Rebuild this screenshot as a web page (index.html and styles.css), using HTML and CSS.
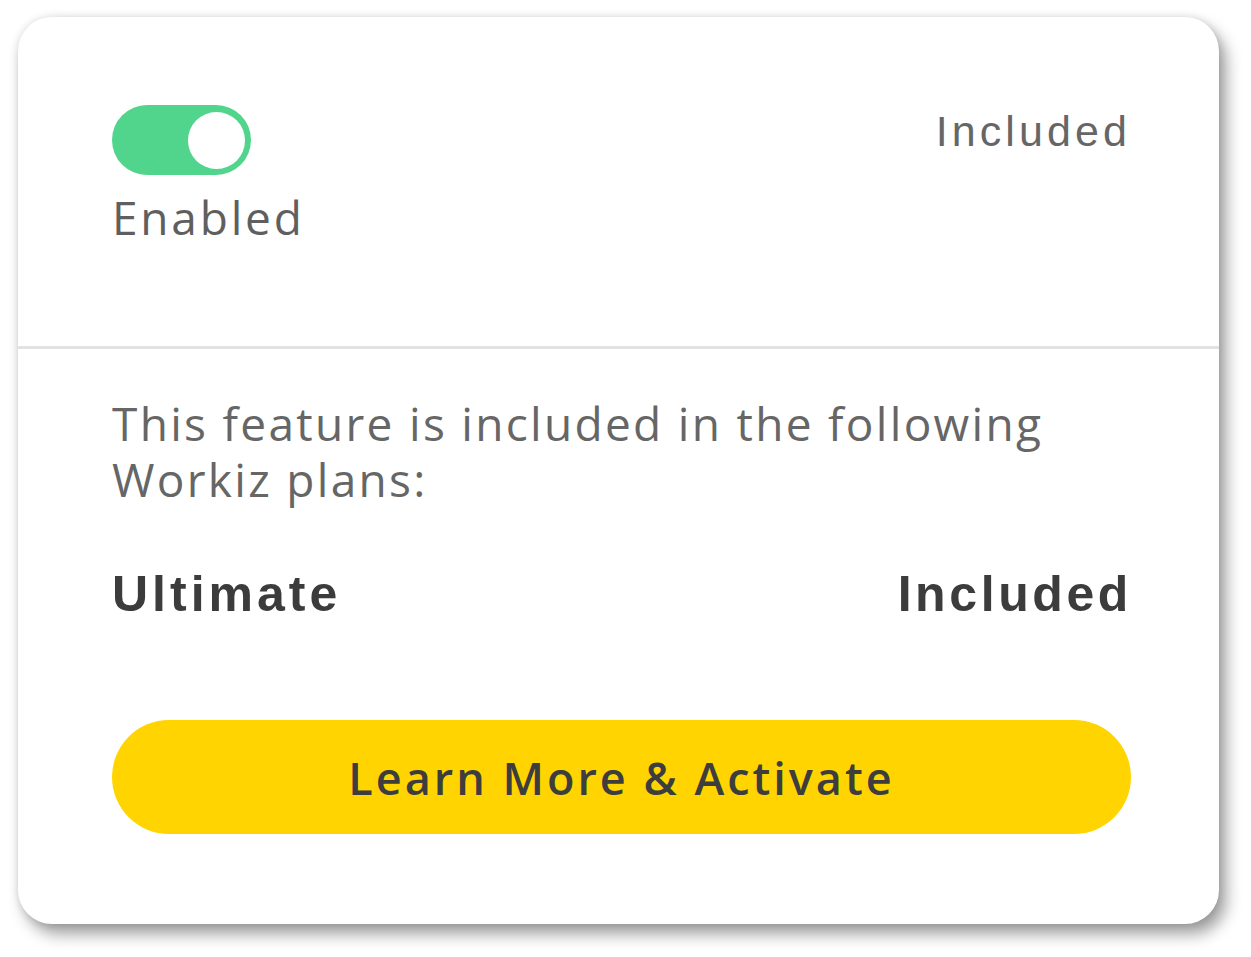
FILE: index.html
```html
<!DOCTYPE html>
<html lang="en">
<head>
<meta charset="utf-8">
<title>Feature</title>
<link rel="stylesheet" href="styles.css">
</head>
<body>
<div class="card">
  <div class="top">
    <div class="status">
      <div class="toggle"><span class="knob"></span></div>
      <div class="status-label">Enabled</div>
    </div>
    <div class="included-top">Included</div>
  </div>
  <div class="divider"></div>
  <div class="bottom">
    <p class="desc">This feature is included in the following Workiz plans:</p>
    <div class="plan-row">
      <span class="plan-name">Ultimate</span>
      <span class="plan-status">Included</span>
    </div>
    <button class="cta">Learn More &amp; Activate</button>
  </div>
</div>
</body>
</html>
```
FILE: styles.css
```css
html, body {
  margin: 0;
  padding: 0;
  background: #ffffff;
}
body {
  padding: 17px 0 33px 18px;
  min-height: 957px;
  box-sizing: border-box;
  font-family: "Open Sans", "Noto Sans", sans-serif;
}
.card {
  width: 1201px;
  height: 907px;
  box-sizing: border-box;
  background: #ffffff;
  border-radius: 34px;
  box-shadow: 7px 10px 16px rgba(0, 0, 0, 0.38), 0 0 8px rgba(0, 0, 0, 0.12);
  display: flex;
  flex-direction: column;
}
.top {
  height: 329px;
  box-sizing: border-box;
  padding: 88px 91px 0 94px;
  display: flex;
  justify-content: space-between;
  align-items: flex-start;
}
.status {
  display: flex;
  flex-direction: column;
  align-items: flex-start;
}
.toggle {
  width: 139px;
  height: 70px;
  border-radius: 35px;
  background: #51d48c;
  display: flex;
  align-items: center;
  justify-content: flex-end;
  padding-right: 6px;
  box-sizing: border-box;
}
.knob {
  width: 57px;
  height: 57px;
  border-radius: 50%;
  background: #ffffff;
}
.status-label {
  margin-top: 15px;
  font-size: 46px;
  line-height: 54px;
  color: #5f5f5f;
  letter-spacing: 2.8px;
}
.included-top {
  margin-top: 0;
  font-family: "Liberation Sans", Arial, sans-serif;
  font-size: 43px;
  line-height: 52px;
  color: #666666;
  letter-spacing: 4.1px;
  margin-right: -3px;
}
.divider {
  height: 3px;
  background: #e2e2e2;
}
.bottom {
  padding: 46px 88px 0 94px;
  display: flex;
  flex-direction: column;
}
.desc {
  margin: 0;
  font-size: 46px;
  line-height: 56px;
  color: #666666;
  letter-spacing: 2.3px;
}
.plan-row {
  margin-top: 57px;
  display: flex;
  justify-content: space-between;
  align-items: center;
}
.plan-name, .plan-status {
  font-family: "Liberation Sans", Arial, sans-serif;
  font-weight: 700;
  font-size: 50px;
  line-height: 60px;
  color: #3c3c3c;
  letter-spacing: 4px;
}
.plan-status {
  margin-right: -1px;
  letter-spacing: 3.6px;
}
.cta {
  margin-top: 96px;
  height: 114px;
  border: none;
  border-radius: 57px;
  background: #ffd400;
  color: #3d3d3d;
  font-family: "Open Sans", "Noto Sans", sans-serif;
  font-weight: 600;
  font-size: 45px;
  letter-spacing: 3px;
  padding: 0;
  width: 100%;
}
```
